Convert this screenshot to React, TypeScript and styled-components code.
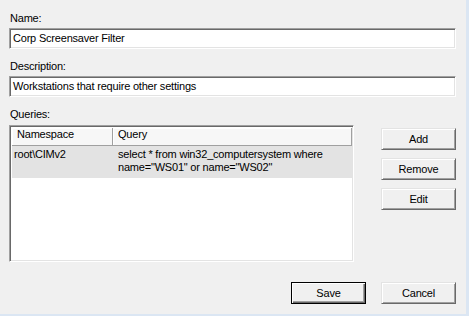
import React from "react";
import styled, { createGlobalStyle } from "styled-components";

const Global = createGlobalStyle`
  html, body { margin: 0; padding: 0; background: #f0f0f0; }
  body {
    font-family: "Liberation Sans", Arial, sans-serif;
    font-size: 11px;
    letter-spacing: -0.2px;
    color: #000;
  }
  * { box-sizing: border-box; }
`;

const Dialog = styled.div`
  width: 469px;
  height: 316px;
  display: flex;
  flex-direction: column;
  padding: 12px 10px 0 9px;
  background: #f0f0f0;
  border-right: 3px solid #dbe6f3;
  border-bottom: 2px solid #dbe6f3;
`;

const Label = styled.div<{ $top?: number }>`
  height: 13px;
  line-height: 13px;
  margin-top: ${(p) => p.$top ?? 0}px;
  margin-bottom: 3px;
  padding-left: 1px;
`;

const sunken = `
  border-style: solid;
  border-width: 1px;
  border-color: #a0a0a0 #ffffff #ffffff #a0a0a0;
  box-shadow: inset 1px 1px 0 #696969, inset -1px -1px 0 #e3e3e3;
  background: #fff;
`;

const TextBox = styled.div`
  ${sunken}
  height: 21px;
  padding: 1px 3px 0 3px;
  line-height: 16px;
  white-space: nowrap;
`;

const Main = styled.div`
  display: flex;
  align-items: flex-start;
  margin-top: 1px;
`;

const ListView = styled.div`
  ${sunken}
  width: 345px;
  height: 137px;
  padding: 2px 1px 1px 2px;
  display: flex;
  flex-direction: column;
`;

const HeaderRow = styled.div`
  display: flex;
  height: 18px;
  background: #f7f7f7;
  border-bottom: 1px solid #a0a0a0;
  border-right: 1px solid #a0a0a0;
`;

const HeaderCell = styled.div<{ $w?: number }>`
  ${(p) => (p.$w ? `width: ${p.$w}px;` : "flex: 1;")}
  line-height: 11px;
  padding: 1px 0 0 5px;
  border-right: ${(p) => (p.$w ? "1px solid #a0a0a0" : "none")};
  box-shadow: inset 1px 1px 0 #ffffff;
`;

const Row = styled.div`
  display: flex;
  height: 32px;
  background: #e3e3e3;
`;

const Cell = styled.div<{ $w?: number; $pl: number }>`
  ${(p) => (p.$w ? `width: ${p.$w}px;` : "flex: 1;")}
  padding: 2px 0 0 ${(p) => p.$pl}px;
  line-height: 13px;
  white-space: nowrap;
`;

const SideButtons = styled.div`
  display: flex;
  flex-direction: column;
  gap: 8px;
  padding-top: 3px;
  margin-left: 27px;
`;

const Button = styled.button<{ $default?: boolean }>`
  width: 75px;
  height: 22px;
  margin: 0;
  padding: 0 0 1px 0;
  font-family: "Liberation Sans", Arial, sans-serif;
  font-size: 11px;
  letter-spacing: -0.2px;
  color: #000;
  background: #f0f0f0;
  border-style: solid;
  border-width: 1px;
  border-color: ${(p) =>
    p.$default ? "#000 #000 #000 #000" : "#e3e3e3 #696969 #696969 #e3e3e3"};
  box-shadow: ${(p) =>
    p.$default
      ? "inset 1px 1px 0 #ffffff, inset -1px -1px 0 #696969, inset -2px -2px 0 #a0a0a0"
      : "inset 1px 1px 0 #ffffff, inset -1px -1px 0 #a0a0a0"};
  line-height: 18px;
  text-align: center;
`;

const Footer = styled.div`
  display: flex;
  justify-content: flex-end;
  gap: 15px;
  margin-top: 20px;
`;

export default function App() {
  return (
    <>
      <Global />
      <Dialog>
        <Label>Name:</Label>
        <TextBox>Corp Screensaver Filter</TextBox>
        <Label $top={11}>Description:</Label>
        <TextBox>Workstations that require other settings</TextBox>
        <Label $top={11}>Queries:</Label>
        <Main>
          <ListView>
            <HeaderRow>
              <HeaderCell $w={101}>Namespace</HeaderCell>
              <HeaderCell>Query</HeaderCell>
            </HeaderRow>
            <Row>
              <Cell $w={101} $pl={2}>root\CIMv2</Cell>
              <Cell $pl={5}>
                select * from win32_computersystem where
                <br />
                name="WS01" or name="WS02"
              </Cell>
            </Row>
          </ListView>
          <SideButtons>
            <Button>Add</Button>
            <Button>Remove</Button>
            <Button>Edit</Button>
          </SideButtons>
        </Main>
        <Footer>
          <Button $default>Save</Button>
          <Button>Cancel</Button>
        </Footer>
      </Dialog>
    </>
  );
}
